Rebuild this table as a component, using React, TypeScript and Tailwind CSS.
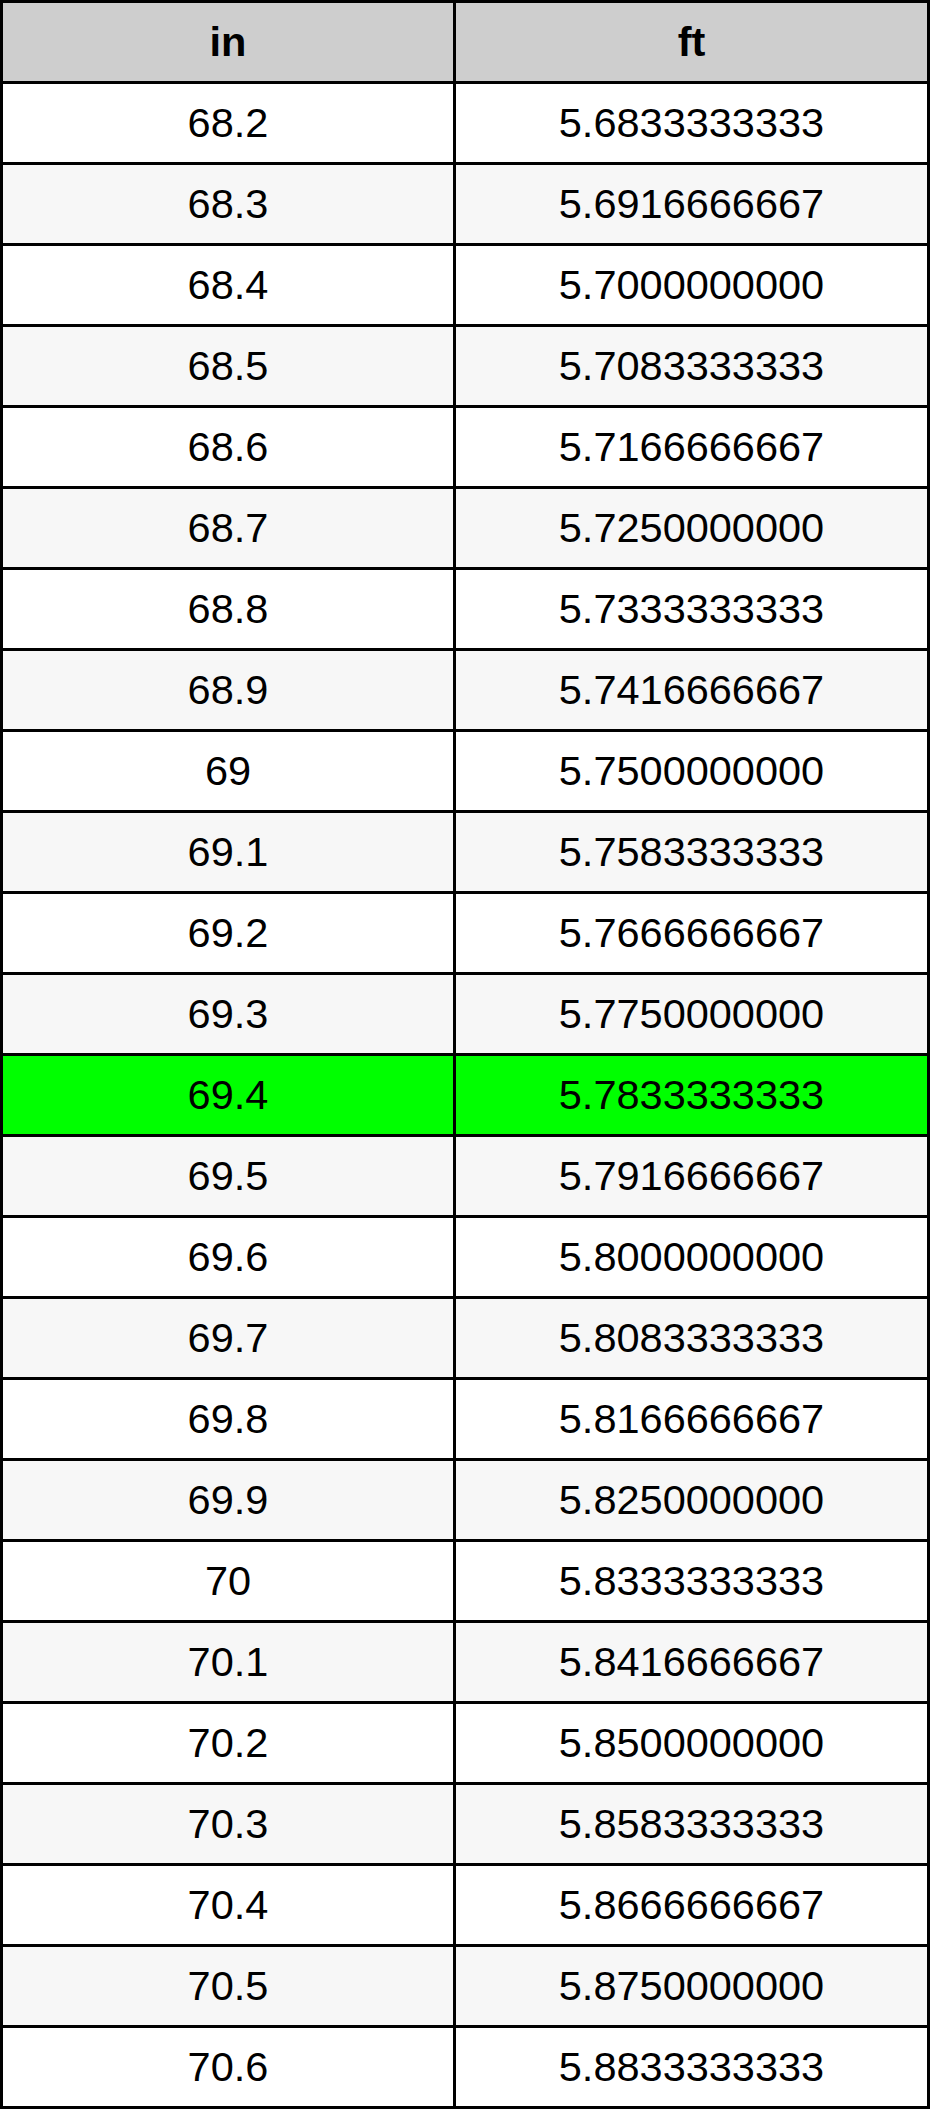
const rows: [string, string][] = [
  ["68.2", "5.6833333333"],
  ["68.3", "5.6916666667"],
  ["68.4", "5.7000000000"],
  ["68.5", "5.7083333333"],
  ["68.6", "5.7166666667"],
  ["68.7", "5.7250000000"],
  ["68.8", "5.7333333333"],
  ["68.9", "5.7416666667"],
  ["69", "5.7500000000"],
  ["69.1", "5.7583333333"],
  ["69.2", "5.7666666667"],
  ["69.3", "5.7750000000"],
  ["69.4", "5.7833333333"],
  ["69.5", "5.7916666667"],
  ["69.6", "5.8000000000"],
  ["69.7", "5.8083333333"],
  ["69.8", "5.8166666667"],
  ["69.9", "5.8250000000"],
  ["70", "5.8333333333"],
  ["70.1", "5.8416666667"],
  ["70.2", "5.8500000000"],
  ["70.3", "5.8583333333"],
  ["70.4", "5.8666666667"],
  ["70.5", "5.8750000000"],
  ["70.6", "5.8833333333"],
];

const HIGHLIGHT = "69.4";

export default function App() {
  return (
    <div className="w-[930px] bg-white font-['Liberation_Sans',Arial,sans-serif] text-[41.5px] text-black">
      {/* black grid background + 3px gaps draw the cell borders */}
      <div className="grid grid-cols-[450px_471px] gap-[3px] bg-black p-[3px]">
        <div className="flex h-[78px] items-center justify-center bg-[#cecece] font-bold">in</div>
        <div className="flex h-[78px] items-center justify-center bg-[#cecece] font-bold">ft</div>
        {rows.map(([inch, ft], i) => {
          const bg = inch === HIGHLIGHT ? "bg-[#00ff00]" : i % 2 === 1 ? "bg-[#f7f7f7]" : "bg-white";
          return (
            <div key={inch} className="contents">
              <div className={`flex h-[78px] items-center justify-center ${bg}`}>{inch}</div>
              <div className={`flex h-[78px] items-center justify-center ${bg}`}>{ft}</div>
            </div>
          );
        })}
      </div>
    </div>
  );
}
